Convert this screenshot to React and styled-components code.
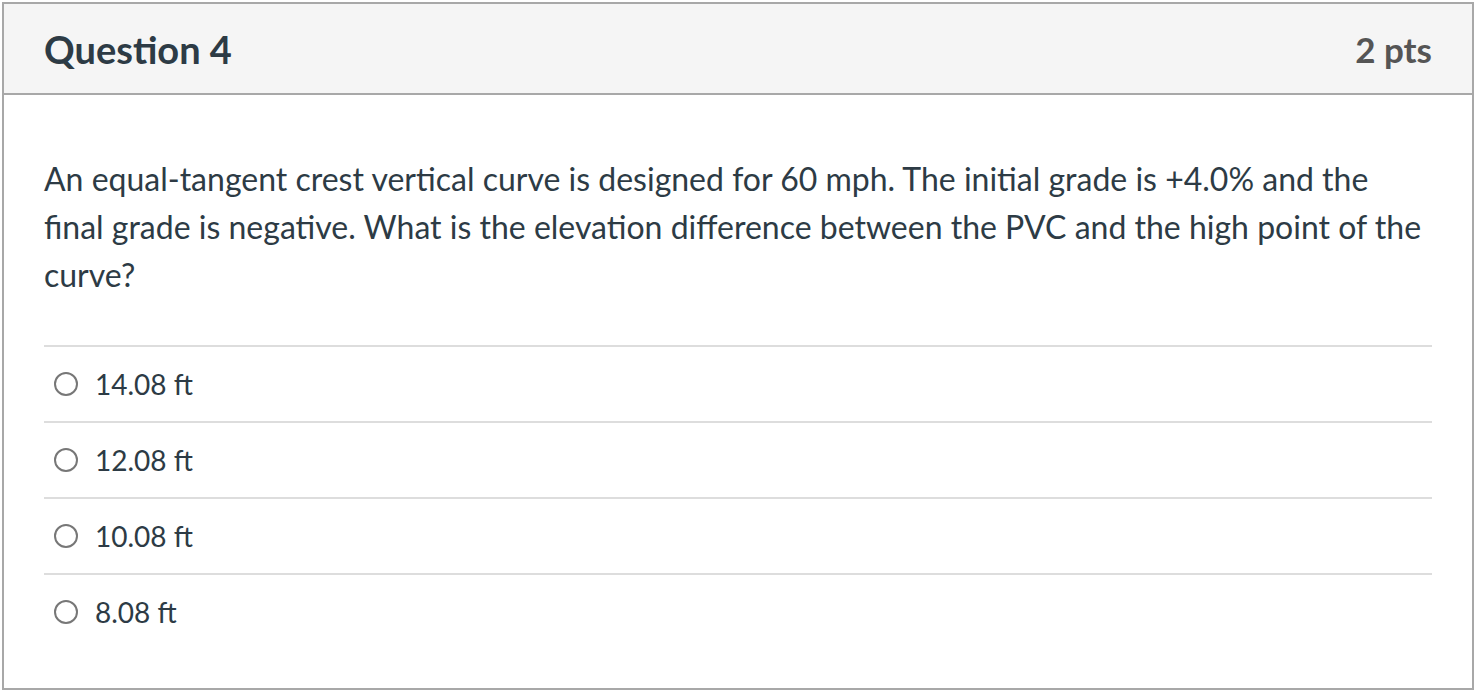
import React from 'react';
import styled, { createGlobalStyle } from 'styled-components';

const GlobalStyle = createGlobalStyle`
  body {
    margin: 0;
    background: #ffffff;
    font-family: Lato, "Open Sans", sans-serif;
    color: #2d3b45;
  }
`;

const QuestionCard = styled.div`
  margin: 2px;
  width: 1472px;
  height: 688px;
  box-sizing: border-box;
  border: 2px solid #a8a8a8;
  display: flex;
  flex-direction: column;
`;

const Header = styled.div`
  height: 91px;
  box-sizing: border-box;
  background: #f5f5f5;
  border-bottom: 2px solid #a8a8a8;
  display: flex;
  align-items: center;
  justify-content: space-between;
  padding: 0 40px;
`;

const Title = styled.h2`
  margin: 0;
  font-size: 38px;
  font-weight: 700;
  color: #2d3b45;
`;

const Points = styled.div`
  font-size: 35px;
  font-weight: 700;
  color: #555555;
`;

const Body = styled.div`
  padding: 60px 40px 0;
`;

const QuestionText = styled.p`
  margin: 0 0 46px;
  font-size: 32px;
  line-height: 48px;
  color: #2d3b45;
`;

const AnswerList = styled.div`
  display: flex;
  flex-direction: column;
`;

const AnswerRow = styled.label`
  display: flex;
  align-items: center;
  height: 76px;
  box-sizing: border-box;
  border-top: 2px solid #dddddd;
  padding-left: 10px;
  gap: 17px;
  font-size: 28px;
  color: #2d3b45;
`;

const Radio = styled.span`
  width: 24px;
  height: 24px;
  box-sizing: border-box;
  border-radius: 50%;
  border: 2px solid #777777;
  background: #ffffff;
  flex-shrink: 0;
`;

const answers = ['14.08 ft', '12.08 ft', '10.08 ft', '8.08 ft'];

const App = () => {
    return (
        <>
            <GlobalStyle />
            <QuestionCard>
                <Header>
                    <Title>Question 4</Title>
                    <Points>2 pts</Points>
                </Header>
                <Body>
                    <QuestionText>
                        An equal-tangent crest vertical curve is designed for 60 mph. The initial grade is +4.0% and the
                        final grade is negative. What is the elevation difference between the PVC and the high point of the
                        curve?
                    </QuestionText>
                    <AnswerList>
                        {answers.map((answer) => (
                            <AnswerRow key={answer}>
                                <Radio />
                                {answer}
                            </AnswerRow>
                        ))}
                    </AnswerList>
                </Body>
            </QuestionCard>
        </>
    );
};

export default App;
